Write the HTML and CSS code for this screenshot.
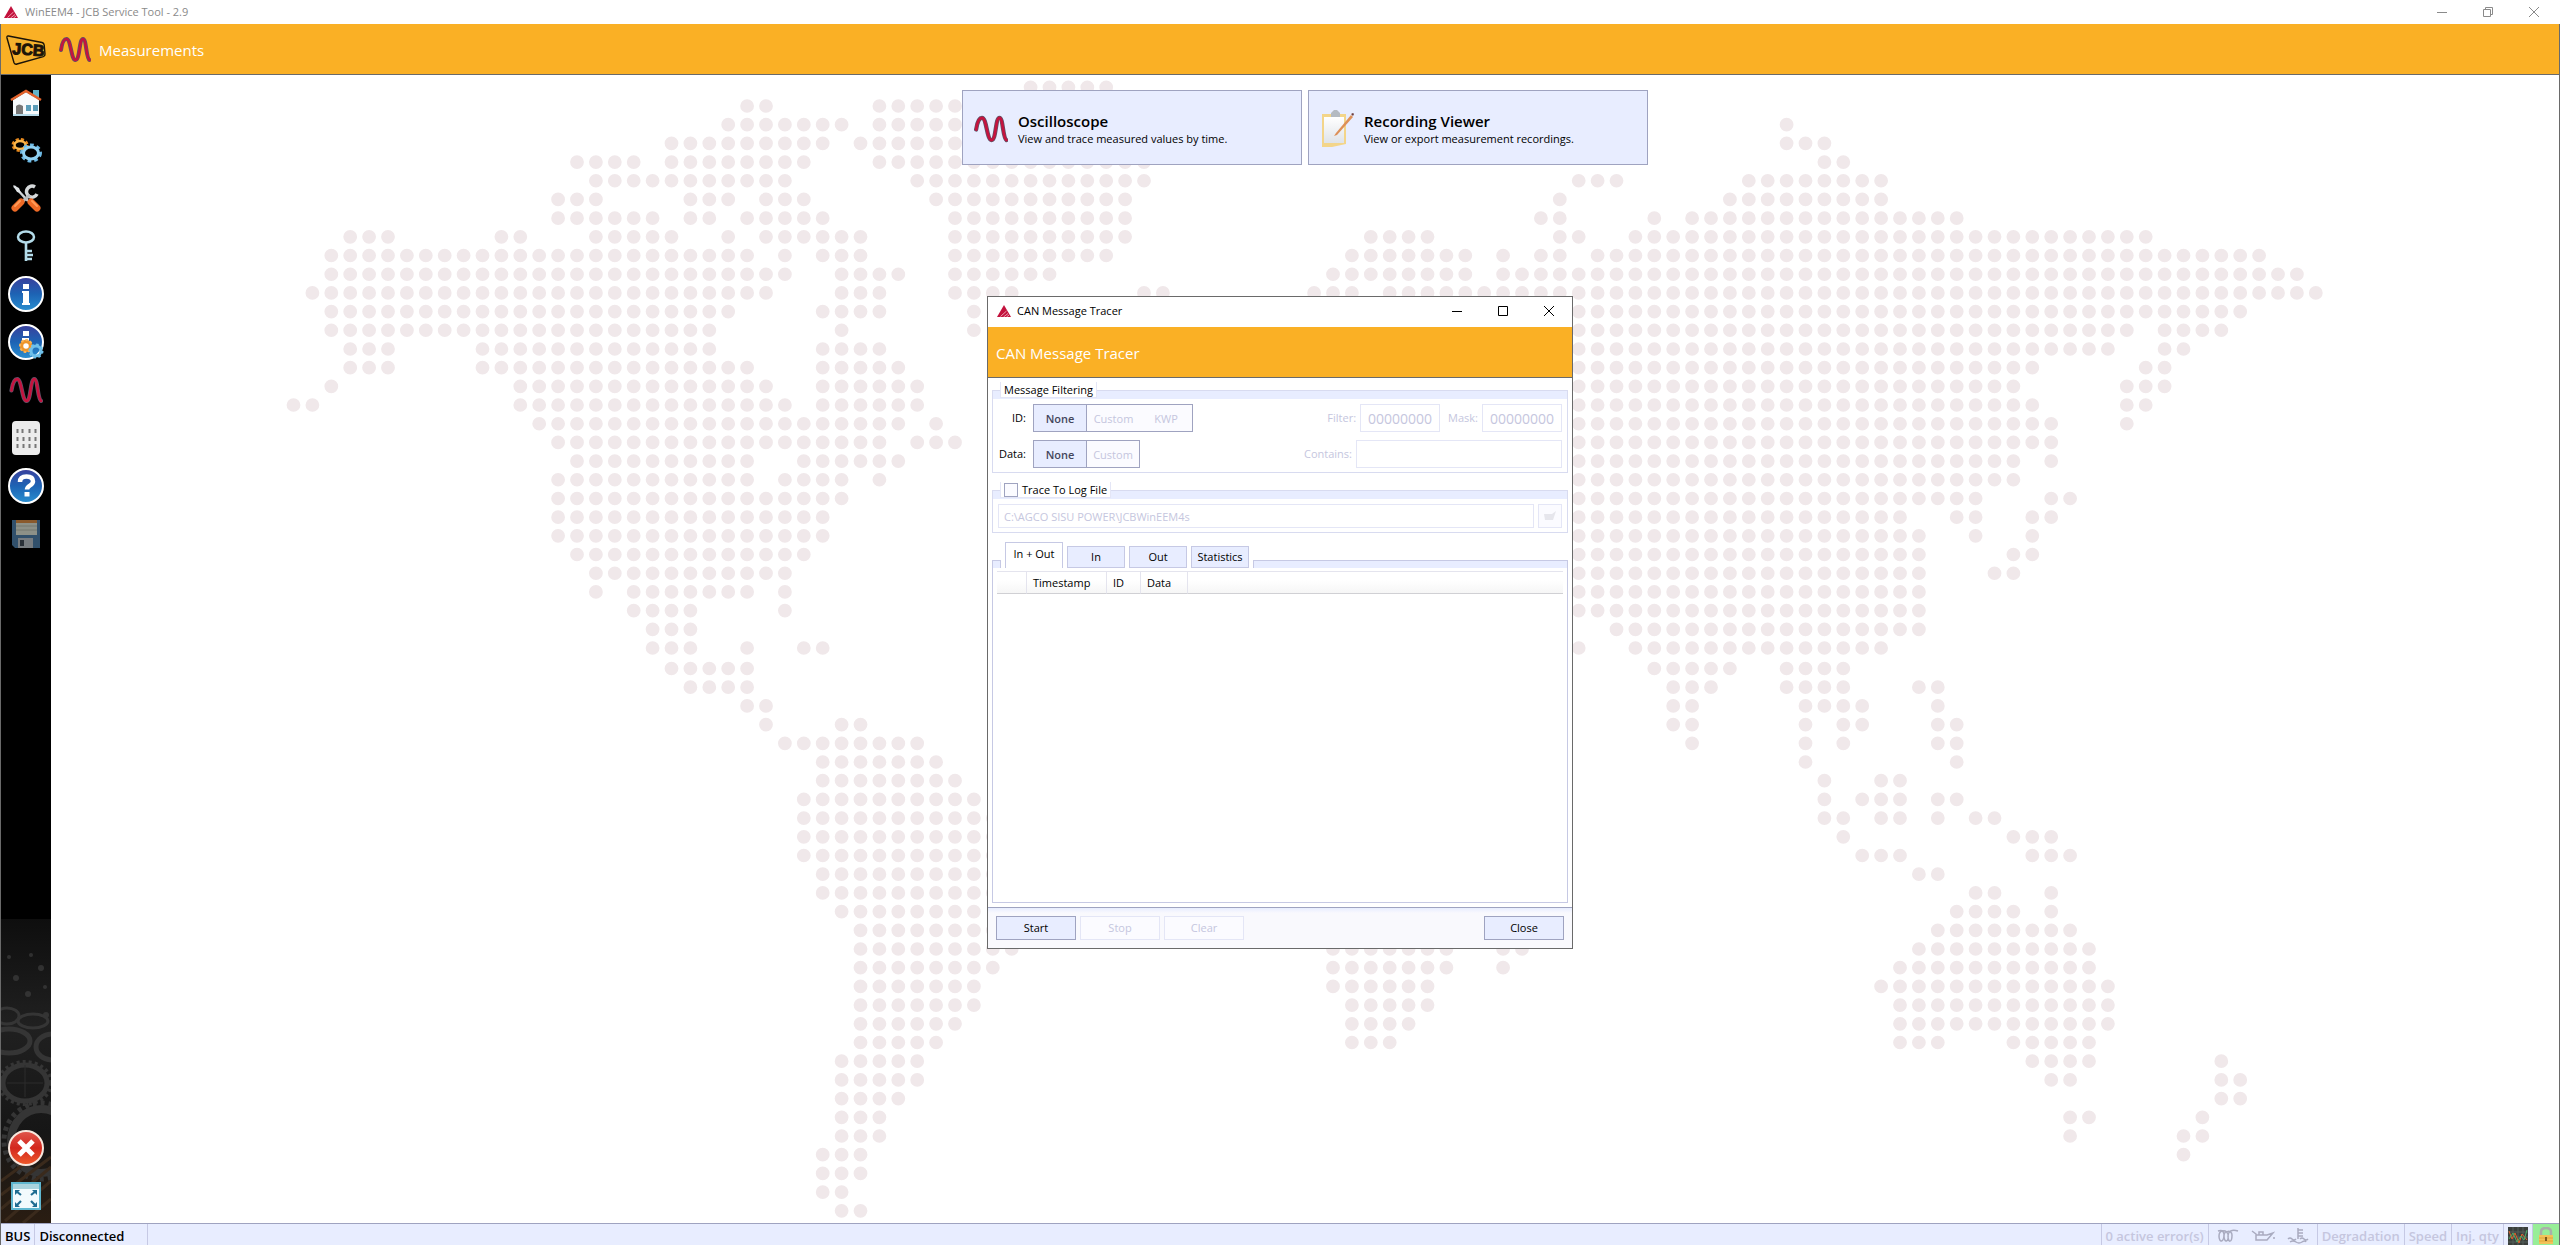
FILE: index.html
```html
<!DOCTYPE html>
<html lang="en">
<head>
<meta charset="utf-8">
<title>WinEEM4 - JCB Service Tool - 2.9</title>
<link rel="stylesheet" href="styles.css">
</head>
<body>
<svg class="defs" aria-hidden="true">
  <defs>
    <linearGradient id="blue" x1="0" y1="0" x2="0" y2="1"><stop offset="0" stop-color="#3a3f9c"/><stop offset=".5" stop-color="#1d63b4"/><stop offset="1" stop-color="#2a8fd0"/></linearGradient>
    <linearGradient id="red" x1="0" y1="0" x2="0" y2="1"><stop offset="0" stop-color="#e0574c"/><stop offset=".5" stop-color="#d3271d"/><stop offset="1" stop-color="#ee5a2a"/></linearGradient>
    <linearGradient id="paper" x1="0" y1="0" x2="0" y2="1"><stop offset="0" stop-color="#ffffff"/><stop offset="1" stop-color="#dfe3e8"/></linearGradient>
  </defs>
  <symbol id="brand" viewBox="0 0 14 12"><path d="M7 0 14 12H0z" fill="#c3123d"/><path d="M3.500 11.500 9.500 6M6.500 12 11 8.500M9.500 12l2.500-2" stroke="#f6c3cc" stroke-width=".8"/></symbol>
  <symbol id="wave" viewBox="0 0 32 26"><path d="M2 13C3 6 5 2 7.500 2c4.500 0 4.500 21 9 21S20 2 24 2c3.500 0 3 19 6.500 21" fill="none" stroke="#5c5468" stroke-width="4" stroke-linecap="round"/><path d="M2 13C3 6 5 2 7.500 2c4.500 0 4.500 21 9 21S20 2 24 2c3.500 0 3 19 6.500 21" fill="none" stroke="#c4143f" stroke-width="2.600" stroke-linecap="round"/></symbol>
</svg>

<header class="titlebar">
  <svg class="brand"><use href="#brand"/></svg>
  <h1 class="titlebar-text">WinEEM4 - JCB Service Tool - 2.9</h1>
  <div class="caption-buttons">
    <button type="button" aria-label="Minimize"><svg width="12" height="12" viewBox="0 0 12 12"><path d="M1 6.500h10"/></svg></button>
    <button type="button" aria-label="Restore"><svg width="12" height="12" viewBox="0 0 12 12"><path d="M1.500 3.500h7v7h-7zM3.500 3.500v-2h7v7h-2"/></svg></button>
    <button type="button" aria-label="Close"><svg width="12" height="12" viewBox="0 0 12 12"><path d="M1 1l10 10M11 1 1 11"/></svg></button>
  </div>
</header>

<div class="shell">
  <div class="banner">
    <svg class="logo" viewBox="0 0 40 32" role="img" aria-label="JCB">
      <path d="M2.500 2 36 8.500q2 .5 2.200 2.500l.8 9q.2 2-1.700 2.600L11 30q-2 .7-3-1.300L1 4Q.5 1.600 2.500 2z" fill="#f5b12d" stroke="#1c1408" stroke-width="1.400"/>
      <text x="6" y="20" transform="rotate(4 6 20)" class="logo-text">JCB</text>
    </svg>
    <svg class="wave"><use href="#wave"/></svg>
    <h2 class="banner-title">Measurements</h2>
  </div>

  <div class="workspace">
    <nav class="sidebar" aria-label="Main">
      <svg class="gears" viewBox="0 0 50 304" preserveAspectRatio="none" aria-hidden="true">
        <defs><linearGradient id="floor" x1="0" y1="0" x2="0" y2="1"><stop offset="0" stop-color="#0e0e0e"/><stop offset=".35" stop-color="#202020"/><stop offset=".7" stop-color="#161616"/><stop offset="1" stop-color="#2a1d12"/></linearGradient></defs>
        <rect width="50" height="304" fill="url(#floor)"/>
        <g fill="#444" opacity=".6"><circle cx="40" cy="49" r="3"/><circle cx="15" cy="59" r="3"/><circle cx="27" cy="75" r="3"/><circle cx="44" cy="68" r="2"/><circle cx="45" cy="96" r="3"/><circle cx="8" cy="38" r="2"/><circle cx="30" cy="36" r="2"/></g>
        <g fill="none" stroke="#353535">
          <ellipse cx="6" cy="97" rx="12" ry="8" stroke-width="3"/><ellipse cx="32" cy="102" rx="15" ry="7" stroke-width="3"/>
          <ellipse cx="8" cy="122" rx="21" ry="12" stroke-width="5"/><ellipse cx="52" cy="128" rx="17" ry="13" stroke-width="5"/>
          <ellipse cx="24" cy="164" rx="22" ry="18" stroke-width="5"/><ellipse cx="24" cy="164" rx="26" ry="21" stroke-width="4" stroke-dasharray="3 3"/>
          <path d="M24 146v32M6 164h36" stroke="#2c2c2c"/>
          <ellipse cx="40" cy="222" rx="30" ry="32" stroke-width="8"/><ellipse cx="40" cy="222" rx="37" ry="38" stroke-width="5" stroke-dasharray="4 4"/>
        </g>
        <path d="M0 262 30 240M0 276l50-38M0 290l50-42M4 302l46-40M22 304l28-24" stroke="#3a2a1c" stroke-width="3"/>
      </svg>
      <button type="button" aria-label="Home"><svg width="34" height="28" viewBox="0 0 34 28"><path d="M24 2h6v9h-6z" fill="#5fb3c9"/><path d="M4 12 17 4l13 8v15H4z" fill="#f6fafc"/><path d="M2 12 17 3l15 9" fill="none" stroke="#e2622b" stroke-width="2.500"/><path d="M7 26v-8q3-3 7 0v8z" fill="#777"/><path d="M17 17h5v6h-5zM24 17h5v6h-5z" fill="#5a9db9"/><path d="M4 26h26v2H4z" fill="#b5d9e8"/></svg></button>
      <button type="button" aria-label="Settings"><svg width="32" height="26" viewBox="0 0 32 26"><ellipse cx="10" cy="8" rx="7" ry="5.500" fill="none" stroke="#e8891d" stroke-width="3" stroke-dasharray="3 2"/><ellipse cx="10" cy="8" rx="5.500" ry="4" fill="none" stroke="#f9b54a" stroke-width="2.500"/><ellipse cx="21" cy="16" rx="9" ry="7.500" fill="none" stroke="#6db9e4" stroke-width="4" stroke-dasharray="3.500 2.800"/><ellipse cx="21" cy="16" rx="7.500" ry="6" fill="none" stroke="#8fd0f2" stroke-width="3"/></svg></button>
      <button type="button" aria-label="Tools"><svg width="30" height="28" viewBox="0 0 30 28"><path d="M3 2 17 17" stroke="#cfd3d6" stroke-width="2.500"/><path d="M2 1l6 3 2 5-4-1z" fill="#dfe3e6"/><path d="M24 3a5.500 5.500 0 1 0 2 7" fill="none" stroke="#d5d8da" stroke-width="3.500"/><path d="M19 11 12 17" stroke="#b7bbbe" stroke-width="3"/><path d="M10 18 4 24M20 18l6 6" stroke="#ee6a26" stroke-width="7" stroke-linecap="round"/><path d="M9 17 4 22M21 17l5 5" stroke="#ff9a56" stroke-width="2" stroke-linecap="round"/></svg></button>
      <button type="button" aria-label="Key"><svg width="22" height="32" viewBox="0 0 22 32"><ellipse cx="11" cy="7" rx="8" ry="5.500" fill="none" stroke="#b4dcea" stroke-width="2.500"/><path d="M11 12v19M12 21h5M12 25h6M12 29h5" stroke="#b4dcea" stroke-width="2.600" fill="none"/></svg></button>
      <button type="button" aria-label="Information"><svg width="36" height="36" viewBox="0 0 36 36"><circle cx="18" cy="18" r="17" fill="url(#blue)" stroke="#fff" stroke-width="2"/><path d="M15 8h6v5h-6zM14 15h7v12h1v2h-8v-2h1V17h-1z" fill="#fff"/></svg></button>
      <button type="button" aria-label="Information settings"><svg width="36" height="36" viewBox="0 0 36 36"><circle cx="18" cy="18" r="17" fill="url(#blue)" stroke="#fff" stroke-width="2"/><path d="M15 7h6v5h-6zM14 14h7v13h-7z" fill="#fff"/><circle cx="18" cy="22" r="4.500" fill="none" stroke="#ee962c" stroke-width="3.500"/><circle cx="18" cy="22" r="6" fill="none" stroke="#f6b45a" stroke-width="2" stroke-dasharray="2.500 2"/><circle cx="28" cy="27" r="5" fill="none" stroke="#6fc0ea" stroke-width="3"/><circle cx="28" cy="27" r="6.500" fill="none" stroke="#6fc0ea" stroke-width="2" stroke-dasharray="2.500 2.500"/></svg></button>
      <button type="button" aria-label="Measurements"><svg width="34" height="27"><use href="#wave"/></svg></button>
      <button type="button" aria-label="Binary data"><svg width="28" height="34" viewBox="0 0 28 34"><rect width="28" height="34" rx="4" fill="#ececec"/><path d="M5.500 8v4M10.500 8v4M17.500 8v4M23.500 8v4M5.500 16v4M11.500 16v4M17.500 16v4M23.500 16v4M5.500 23v4M11.500 23v4M17.500 23v4M23.500 23v4" stroke="#777" stroke-width="2"/></svg></button>
      <button type="button" aria-label="Help"><svg width="36" height="36" viewBox="0 0 36 36"><circle cx="18" cy="18" r="17" fill="url(#blue)" stroke="#fff" stroke-width="2"/><path d="M12 14q0-5.500 6.500-5.500T25 13.500c0 4-6 4-6 8" fill="none" stroke="#fff" stroke-width="4.500"/><path d="M16.500 24h5v4.500h-5z" fill="#fff"/></svg></button>
      <button type="button" aria-label="Save" disabled><svg width="30" height="30" viewBox="0 0 30 30"><path d="M1 1h28v28H4l-3-3z" fill="#31506b"/><path d="M5 1h21v15H5z" fill="#8d9188"/><path d="M5 1h21v3H5z" fill="#8a5a2c"/><path d="M5 7h21M5 11h21" stroke="#75796f"/><path d="M7 19h15v10H7z" fill="#777c80"/><path d="M9 21h4v6H9z" fill="#2a3138"/></svg></button>
      <span class="spacer"></span>
      <button type="button" aria-label="Exit"><svg width="36" height="36" viewBox="0 0 36 36"><circle cx="18" cy="18" r="17" fill="url(#red)" stroke="#f8e6dc" stroke-width="2"/><path d="m11 11 14 14M25 11 11 25" stroke="#fff" stroke-width="5"/></svg></button>
      <button type="button" aria-label="Full screen"><svg width="30" height="28" viewBox="0 0 30 28"><path d="M1 1h28v26H1z" fill="#f2fafd" stroke="#5fb6cf" stroke-width="2"/><path d="M2 2h26v5H2z" fill="#a9d3de"/><g stroke="#1f6c91" stroke-width="2.200"><path d="m5 9 5 4M25 9l-5 4M5 24l5-5M25 24l-5-5"/></g><path d="M4 8h5l-5 5zM26 8h-5l5 5zM4 25h5l-5-5zM26 25h-5l5-5z" fill="#1f6c91"/></svg></button>
    </nav>

    <main class="main">
      <!-- Dotted world map: each "Mx yh n" is a run of dots, one per unit. -->
      <svg class="map" viewBox="51 75 2508 1148" preserveAspectRatio="xMidYMin slice" aria-hidden="true">
        <g transform="translate(293.500 87.300) scale(18.900 18.690)">
          <path d="M39 0h4.100M24 1h1.100M31 1h13.100M23 2h6.100M31 2h13.100M20 3h8.100M30 3h14.100M15 4h3.100M20 4h7.100M31 4h14.100M16 5h10.100M33 5h12.100
          M14 6h2.100M21 6h2.100M25 6h2.100M34 6h10.100M14 7h5.100M21 7h1.100M24 7h4.100M35 7h9.100M3 8h2.100M11 8h1.100M16 8h4.100M23 8h.1M25 8h5.100M35 8h9.100
          M2 9h22.100M26 9h.1M28 9h2.100M35 9h8.100M2 10h24.100M29 10h3.100M35 10h5.100M1 11h24.100M29 11h2.100M35 11h3.100M45 11h1.100
          M2 12h21.100M28 12h3.100M36 12h.1M2 13h20.100M29 13h.1M36 13h.1M3 14h2.100M10 14h12.100M28 14h3.100M3 15h2.100M10 15h14.100M28 15h4.100
          M2 16h.1M12 16h13.100M28 16h5.100M0 17h1.100M12 17h14.100M28 17h5.100M13 18h19.100M34 18h.1M14 19h17.100M33 19h2.100M15 20h9.100M27 20h5.100
          M14 21h10.100M26 21h3.100M31 21h.1M14 22h15.100M14 23h14.100M14 24h14.100M15 25h12.100M16 26h10.100M16 27h.1M18 27h6.100M26 27h.1
          M18 28h3.100M26 28h.1M19 29h2.100M19 30h2.100M24 30h.1M27 30h1.100"/>
          <path d="M79 2h.1M79 3h2.100M81 4h1.100M68 5h2.100M77 5h7.100M67 6h.1M76 6h8.100M66 7h1.100M72 7h.1M74 7h14.100M57 8h3.100M67 8h1.100M71 8h27.100
          M56 9h6.100M64 9h.1M66 9h1.100M69 9h35.100M55 10h7.100M64 10h42.100M54 11h2.100M58 11h49.100M66 12h37.100M66 13h31.100M99 13h3.100
          M66 14h30.100M99 14h1.100M66 15h26.100M98 15h1.100M66 16h25.100M97 16h2.100M66 17h26.100M97 17h1.100M66 18h27.100M97 18h.1M66 19h27.100
          M66 20h25.100M93 20h.1M66 21h25.100M66 22h23.100M93 22h1.100M66 23h19.100M88 23h1.100M92 23h1.100M66 24h20.100M89 24h.1M92 24h.1
          M66 25h20.100M91 25h1.100M66 26h20.100M90 26h1.100M66 27h20.100M66 28h20.100M70 29h16.100M68 30h.1M71 30h13.100"/>
        </g>
        <g transform="translate(293.500 668.500) scale(18.900 18.700)">
          <path d="M20 0h4.100M21 1h3.100M24 2h1.100M25 3h.1M29 3h1.100M26 4h7.100M28 5h6.100M28 6h7.100M27 7h9.100M27 8h10.100M27 9h10.100M27 10h10.100M28 11h9.100M28 12h9.100
          M29 13h7.100M30 14h7.100M30 15h8.100M30 16h7.100M30 17h6.100M30 18h6.100M30 19h5.100M30 20h4.100M29 21h4.100M29 22h4.100M29 23h3.100M29 24h2.100M29 25h2.100
          M28 26h2.100M28 27h2.100M28 28h1.100M29 29h1.100"/>
          <path d="M55 15h6.100M64 15h1.100M55 16h6.100M64 16h.1M55 17h5.100M56 18h4.100M56 19h3.100M56 20h2.100"/>
          <path d="M72 0h4.100M79 0h3.100M73 1h2.100M79 1h3.100M86 1h1.100M73 2h1.100M80 2h3.100M87 2h.1M73 3h1.100M80 3h.1M82 3h1.100M87 3h1.100
          M74 4h.1M80 4h.1M82 4h.1M87 4h1.100M80 5h.1M88 5h.1M81 6h.1M84 6h1.100M81 7h.1M83 7h2.100M87 7h1.100M81 8h1.100M84 8h1.100M87 8h.1M89 8h1.100
          M82 9h.1M91 9h2.100M83 10h2.100M92 10h2.100M86 11h1.100M89 12h1.100M93 12h.1M88 13h3.100M93 13h.1M87 14h7.100M86 15h9.100M85 16h10.100M84 17h12.100
          M85 18h11.100M85 19h11.100M85 20h2.100M91 20h4.100M92 21h3.100M102 21h.1M93 22h1.100M102 22h1.100M102 23h1.100M94 24h1.100M101 24h.1
          M94 25h.1M100 25h1.100M100 26h.1"/>
        </g>
      </svg>

      <div class="tiles">
        <button type="button" class="tile">
          <svg class="tile-icon" viewBox="0 0 36 40"><use href="#wave" x="0" y="6" width="34" height="29"/></svg>
          <span class="tile-text"><strong>Oscilloscope</strong><span>View and trace measured values by time.</span></span>
        </button>
        <button type="button" class="tile">
          <svg class="tile-icon" viewBox="0 0 36 40"><path d="M2 5h24v30L12 38H2z" fill="#f3d58a"/><path d="M4 8h20v26H4z" fill="url(#paper)"/><path d="M11 8V4l3-3h3l3 3v4z" fill="#b4bac2"/><path d="M31 6 16 24l-2 3 3-1L33 8z" fill="#dd9058"/><path d="m31 5 2 2 1-2-1-1z" fill="#6b3b3b"/></svg>
          <span class="tile-text"><strong>Recording Viewer</strong><span>View or export measurement recordings.</span></span>
        </button>
      </div>
    </main>
  </div>

  <footer class="statusbar">
    <span class="cell strong">BUS</span>
    <span class="cell strong wide">Disconnected</span>
    <span class="spacer"></span>
    <span class="cell first">0 active error(s)</span>
    <span class="cell lamps">
      <svg width="22" height="16" viewBox="0 0 22 16"><path d="M1 3q5-2 6 3c0 9-5 9-5 2C2 2 9 1 11 6c1 9-4 9-4 2 0-6 8-6 8-1 0 8-4 8-4 1 0-5 4-7 10-5"/></svg>
      <svg width="24" height="16" viewBox="0 0 24 16"><path d="M1 3l4 3v6h11l6-7-6 2H5M8 7V4h4v3M23 9v2"/></svg>
      <svg width="22" height="16" viewBox="0 0 22 16"><path d="M11 0v11M11 2h5M11 5h5M11 8h5M1 11q2-2 4 0t4 0M13 11q2-2 4 0t4 0M3 14q3-2 6 0t6 0 4 0"/></svg>
    </span>
    <span class="cell">Degradation</span>
    <span class="cell">Speed</span>
    <span class="cell">Inj. qty</span>
    <span class="cell"><svg width="20" height="18" viewBox="0 0 20 18"><path d="M0 0h20v18H0z" fill="#3b3f3c"/><path d="M0 5h20M0 10h20M0 15h20M5 0v20M10 0v20M15 0v20" stroke="#55605a"/><path d="m1 4 3 8 3-6 4 10 3-9 5 6" stroke="#e0632c" fill="none"/><path d="m1 12 4-6 4 9 4-6 3 4 3-10" stroke="#49b06a" fill="none"/></svg></span>
    <span class="cell secure"><svg width="18" height="18" viewBox="0 0 18 18"><path d="M4 9V5q0-4 5-4t5 4v4" fill="none" stroke="#a9b0a9" stroke-width="2.500"/><path d="M2 8h14v9H2z" fill="#f3c25a"/><path d="M2 11h14M2 14h14" stroke="#e0a63b"/><path d="M8 10h2v4H8z" fill="#7d5a1c"/></svg></span>
  </footer>
</div>

<div class="overlay">
  <section class="dialog" role="dialog" aria-labelledby="dialog-title">
    <div class="dialog-titlebar">
      <svg class="brand"><use href="#brand"/></svg>
      <span id="dialog-title">CAN Message Tracer</span>
      <div class="caption-buttons">
        <button type="button" aria-label="Minimize"><svg width="12" height="12" viewBox="0 0 12 12"><path d="M1 6.500h10"/></svg></button>
        <button type="button" aria-label="Maximize"><svg width="12" height="12" viewBox="0 0 12 12"><path d="M1.500 1.500h9v9h-9z"/></svg></button>
        <button type="button" aria-label="Close"><svg width="12" height="12" viewBox="0 0 12 12"><path d="M1 1l10 10M11 1 1 11"/></svg></button>
      </div>
    </div>
    <h2 class="dialog-banner">CAN Message Tracer</h2>

    <div class="dialog-body">
      <fieldset class="group">
        <legend>Message Filtering</legend>
        <div class="filter-row">
          <span class="row-label" id="id-label">ID:</span>
          <div class="segments" role="radiogroup" aria-labelledby="id-label">
            <label><input type="radio" name="id" checked><span>None</span></label>
            <label><input type="radio" name="id"><span>Custom</span></label>
            <label><input type="radio" name="id"><span>KWP</span></label>
          </div>
          <span class="spacer"></span>
          <label class="field" for="filter">Filter:</label>
          <input class="box hex" id="filter" value="00000000" disabled>
          <label class="field next" for="mask">Mask:</label>
          <input class="box hex" id="mask" value="00000000" disabled>
        </div>
        <div class="filter-row">
          <span class="row-label" id="data-label">Data:</span>
          <div class="segments" role="radiogroup" aria-labelledby="data-label">
            <label><input type="radio" name="data" checked><span>None</span></label>
            <label><input type="radio" name="data"><span>Custom</span></label>
          </div>
          <span class="spacer"></span>
          <label class="field" for="contains">Contains:</label>
          <input class="box contains" id="contains" disabled>
        </div>
      </fieldset>

      <fieldset class="group">
        <legend><label class="check"><input type="checkbox">Trace To Log File</label></legend>
        <div class="log-row">
          <input class="box path" aria-label="Log file" value="C:\AGCO SISU POWER\JCBWinEEM4s" disabled>
          <button type="button" class="browse" aria-label="Browse" disabled><svg width="14" height="14" viewBox="0 0 14 14"><path d="M1 5h8l4-3-3 9H2z" fill="#e6e6ec"/></svg></button>
        </div>
      </fieldset>

      <div class="tabs">
        <div class="tablist" role="tablist">
          <span class="edge"></span>
          <button type="button" role="tab" class="tab selected" aria-selected="true">In + Out</button>
          <button type="button" role="tab" class="tab">In</button>
          <button type="button" role="tab" class="tab">Out</button>
          <button type="button" role="tab" class="tab">Statistics</button>
          <span class="edge rest"></span>
        </div>
        <div class="panel" role="tabpanel">
          <table class="messages">
            <colgroup><col class="c-mark"><col class="c-time"><col class="c-id"><col class="c-data"><col></colgroup>
            <thead><tr><th></th><th>Timestamp</th><th>ID</th><th>Data</th><th></th></tr></thead>
          </table>
        </div>
      </div>
    </div>

    <div class="dialog-footer">
      <button type="button" class="btn">Start</button>
      <button type="button" class="btn" disabled>Stop</button>
      <button type="button" class="btn" disabled>Clear</button>
      <span class="spacer"></span>
      <button type="button" class="btn">Close</button>
    </div>
  </section>
</div>
</body>
</html>
```

FILE: styles.css
```css
:root {
  --amber: #fab025;
  --tint: #e8edff;
  --edge: #9fa3c0;
  --soft: #c6c9e4;
  --faint: #e4e6f6;
  --muted: #c5c6de;
  --frame: #6a6a6a;
}

* { box-sizing: border-box; }

body {
  margin: 0;
  height: 100vh;
  display: flex;
  flex-direction: column;
  overflow: hidden;
  background: #fff;
  color: #000;
  font: 12px/16px "Open Sans", "Noto Sans", sans-serif;
}

button, input { font: inherit; color: inherit; margin: 0; padding: 0; border: 0; background: none; }
h1, h2 { margin: 0; font-weight: 400; }
svg { display: block; flex: none; }
.defs { position: absolute; width: 0; height: 0; }
.spacer { flex: 1; }

/* Title bars */
.titlebar { display: flex; align-items: center; height: 24px; flex: none; padding: 0 3px 0 4px; gap: 7px; color: #8a8a8a; }
.titlebar-text { font-size: 11px; line-height: 16px; }
.brand { width: 14px; height: 12px; }
.caption-buttons { display: flex; margin-left: auto; }
.caption-buttons button { width: 46px; height: 24px; display: grid; place-items: center; }
.caption-buttons path { fill: none; stroke: currentColor; }

/* Shell */
.shell { flex: 1; min-height: 0; display: flex; flex-direction: column; border: solid var(--frame); border-width: 0 1px; }
.banner { display: flex; align-items: center; height: 51px; flex: none; padding: 2px 0 0 5px; background: var(--amber); border-bottom: 1px solid var(--frame); color: #fff; }
.logo { width: 40px; height: 32px; }
.logo-text { font: bold 16px "Liberation Sans", sans-serif; fill: #1c1408; stroke: #1c1408; stroke-width: 1; }
.wave { width: 32px; height: 26px; margin: 0 8px 0 13px; }
.banner-title { font-size: 15px; line-height: 22px; }
.workspace { flex: 1; min-height: 0; display: flex; }

.sidebar { position: relative; width: 50px; flex: none; display: flex; flex-direction: column; padding: 3px 0; background: #000; }
.sidebar button { position: relative; height: 48px; display: grid; place-items: center; }
.gears { position: absolute; left: 0; bottom: 0; width: 50px; height: 304px; }

.main { position: relative; flex: 1; padding: 15px; overflow: hidden; }
.map { position: absolute; inset: 0; width: 100%; height: 100%; }
.map path { fill: none; stroke: #f0e8ea; stroke-width: .73; stroke-linecap: round; stroke-dasharray: 0 1; }
.tiles { position: relative; display: flex; justify-content: center; gap: 6px; }
.tile { width: 340px; height: 75px; display: flex; align-items: center; gap: 8px; padding: 2px 11px 0; background: var(--tint); border: 1px solid var(--edge); text-align: left; }
.tile-icon { width: 36px; height: 40px; }
.tile-text { display: flex; flex-direction: column; font-size: 11px; line-height: 16px; }
.tile-text strong { font-size: 15px; line-height: 20px; font-weight: 600; }

/* Status bar */
.statusbar { height: 22px; flex: none; display: flex; background: var(--tint); border-top: 1px solid var(--edge); color: var(--muted); font-size: 13px; line-height: 18px; font-weight: 600; }
.cell { height: 21px; display: flex; align-items: center; padding: 3px 4px 0; border-right: 1px solid var(--soft); white-space: nowrap; }
.cell.first { border-left: 1px solid var(--soft); }
.cell.strong { color: #000; }
.cell.wide { padding-right: 23px; }
.lamps { gap: 12px; padding: 3px 8px 0; }
.lamps path { fill: none; stroke: #a9abc0; stroke-width: 1.500; }
.secure { background: #97ee97; border-right: 0; }

/* Dialog */
.overlay { position: absolute; inset: 0; display: grid; place-items: center; pointer-events: none; }
.dialog { width: 586px; max-width: 100%; background: #fff; border: 1px solid var(--frame); pointer-events: auto; }
.dialog-titlebar { display: flex; align-items: center; height: 30px; gap: 6px; padding: 0 0 2px 9px; font-size: 11px; }
.dialog-banner { height: 51px; padding: 0 8px; background: var(--amber); border-bottom: 1px solid var(--frame); color: #fff; font-size: 15px; line-height: 52px; }
.dialog-body { display: flex; flex-direction: column; gap: 9px; padding: 4px; font-size: 11px; }

.group { min-width: 0; margin: 0; padding: 6px 5px 4px; border: 1px solid #d8dbf0; background: linear-gradient(var(--tint) 8px, #fff 8px); display: flex; flex-direction: column; gap: 8px; }
.group legend { height: 16px; margin-left: 2px; padding: 0 3px; background: #fff; border: 1px solid var(--faint); border-top: 0; line-height: 16px; }
.filter-row, .log-row { display: flex; align-items: center; gap: 4px; }
.row-label { width: 28px; margin-right: 3px; text-align: right; }
.segments { display: flex; height: 28px; border: 1px solid var(--edge); background: #fbfbff; color: var(--muted); }
.segments label { position: relative; width: 53px; display: flex; }
.segments label:last-child { width: 52px; }
.segments input { position: absolute; inset: 0; opacity: 0; }
.segments span { flex: 1; line-height: 27px; text-align: center; }
.segments input:checked + span { background: var(--tint); border-right: 1px solid var(--edge); color: #44465c; font-weight: 600; }
.field { color: var(--muted); }
.field.next { margin-left: 4px; }
.box { height: 28px; border: 1px solid var(--faint); color: var(--muted); padding: 0 5px; }
.hex { width: 80px; font-size: 14px; text-align: center; }
.contains { width: 206px; }
.path { flex: 1; height: 24px; }
.browse { width: 24px; height: 24px; display: grid; place-items: center; border: 1px solid var(--faint); background: #fbfbff; }
.check { display: flex; align-items: center; gap: 4px; }
.check input { appearance: none; width: 14px; height: 14px; border: 1px solid var(--edge); background: #fbfbff; }

.tablist { display: flex; align-items: flex-end; gap: 4px; height: 26px; }
.edge { width: 9px; height: 8px; background: var(--tint); border: 1px solid var(--soft); border-bottom: 0; }
.edge.rest { flex: 1; }
.tab { width: 58px; height: 22px; background: var(--tint); border: 1px solid var(--soft); }
.tab.selected { height: 26px; background: #fff; border-bottom: 0; padding-bottom: 4px; }
.panel { height: 335px; padding: 3px 4px; border: 1px solid var(--soft); border-top: 0; }
.messages { width: 100%; table-layout: fixed; border-collapse: separate; border-spacing: 0; }
.messages th { height: 23px; padding: 0 6px; border: solid #e4e4ee; border-width: 1px 1px 1px 0; border-bottom-color: #d0d0d4; background: linear-gradient(#fff 40%, #f6f6f6); text-align: left; font-weight: 400; }
.messages th:last-child { border-right: 0; }
.c-mark { width: 30px; }
.c-time { width: 80px; }
.c-id { width: 34px; }
.c-data { width: 47px; }

.dialog-footer { display: flex; gap: 4px; padding: 8px; border-top: 1px solid var(--edge); background: linear-gradient(var(--tint), #f9f9fd 5px); font-size: 11px; }
.btn { width: 80px; height: 24px; background: var(--tint); border: 1px solid var(--edge); }
.btn:disabled { background: #fbfbff; border-color: var(--faint); color: var(--muted); }
```
